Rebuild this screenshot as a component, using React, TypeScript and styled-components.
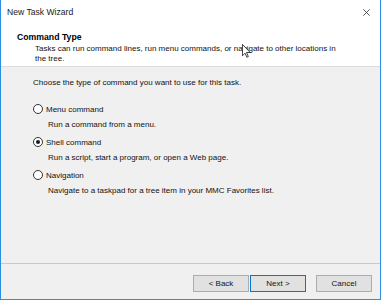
import React from 'react';
import styled, { createGlobalStyle } from 'styled-components';

const GlobalStyle = createGlobalStyle`
  html, body {
    margin: 0;
    padding: 0;
    background: #ffffff;
  }
  body {
    font-family: 'Liberation Sans', Arial, sans-serif;
    color: #000;
  }
`;

const Window = styled.div`
  position: relative;
  box-sizing: border-box;
  width: 381px;
  height: 300px;
  display: flex;
  flex-direction: column;
  background: #f0f0f0;
  border-left: 1px solid #2d8ce4;
  border-right: 1px solid #2d8ce4;
  border-bottom: 1px solid #2d8ce4;
  overflow: hidden;
`;

const TitleBar = styled.div`
  height: 24px;
  display: flex;
  align-items: center;
  justify-content: space-between;
  padding: 0 8px 0 6px;
  background: #fff;
  font-size: 8.6px;
  color: #1a1a1a;
`;

const CloseIcon = styled.svg`
  width: 7px;
  height: 7px;
  margin-right: 2px;
`;

const Header = styled.div`
  height: 43px;
  background: #fff;
  border-bottom: 1px solid #dcdcdc;
  padding: 8px 0 0 16px;
  box-sizing: border-box;
`;

const HeaderTitle = styled.div`
  font-weight: bold;
  font-size: 8.7px;
  line-height: 10px;
  margin-bottom: 2px;
`;

const HeaderText = styled.div`
  font-size: 8px;
  line-height: 10px;
  padding-left: 18px;
  width: 310px;
  color: #111;
`;

const Body = styled.div`
  flex: 1;
  padding: 11px 0 0 32px;
  font-size: 8px;
  color: #111;
`;

const Prompt = styled.div`
  line-height: 10px;
  margin-bottom: 15px;
`;

const Option = styled.div`
  display: flex;
  flex-direction: column;
  margin-bottom: 6px;
`;

const OptionRow = styled.label`
  display: flex;
  align-items: center;
  gap: 3px;
  height: 12px;
`;

const Radio = styled.span<{ $checked?: boolean }>`
  box-sizing: border-box;
  width: 10px;
  height: 10px;
  border-radius: 50%;
  border: 1px solid #333;
  background: #fff;
  display: flex;
  align-items: center;
  justify-content: center;
  &::after {
    content: '';
    width: 4px;
    height: 4px;
    border-radius: 50%;
    background: ${(p) => (p.$checked ? '#1a1a1a' : 'transparent')};
  }
`;

const OptionDesc = styled.div`
  padding-left: 15px;
  line-height: 10px;
  margin-top: 5px;
`;

const Footer = styled.div`
  height: 36px;
  box-sizing: border-box;
  border-top: 1px solid #c9c9c9;
  display: flex;
  justify-content: flex-end;
  align-items: flex-start;
  padding: 11px 8px 0 0;
`;

const Button = styled.button<{ $primary?: boolean; $gap?: number }>`
  box-sizing: border-box;
  width: 56px;
  height: 17px;
  margin-left: ${(p) => p.$gap ?? 0}px;
  background: #e1e1e1;
  border: 1px solid ${(p) => (p.$primary ? '#0078d7' : '#adadad')};
  font-family: 'Liberation Sans', Arial, sans-serif;
  font-size: 8px;
  color: #111;
  padding: 0;
`;

const Cursor = styled.svg`
  position: absolute;
  left: 241px;
  top: 44px;
  width: 9px;
  height: 14px;
`;

const options = [
  { label: 'Menu command', desc: 'Run a command from a menu.', checked: false },
  { label: 'Shell command', desc: 'Run a script, start a program, or open a Web page.', checked: true },
  { label: 'Navigation', desc: 'Navigate to a taskpad for a tree item in your MMC Favorites list.', checked: false },
];

const App: React.FC = () => (
  <>
    <GlobalStyle />
    <Window>
      <TitleBar>
        <span>New Task Wizard</span>
        <CloseIcon viewBox="0 0 10 10">
          <path d="M0.5 0.5 L9.5 9.5 M9.5 0.5 L0.5 9.5" stroke="#333" strokeWidth="1.2" />
        </CloseIcon>
      </TitleBar>
      <Header>
        <HeaderTitle>Command Type</HeaderTitle>
        <HeaderText>
          Tasks can run command lines, run menu commands, or navigate to other locations in the tree.
        </HeaderText>
      </Header>
      <Body>
        <Prompt>Choose the type of command you want to use for this task.</Prompt>
        {options.map((o) => (
          <Option key={o.label}>
            <OptionRow>
              <Radio $checked={o.checked} />
              {o.label}
            </OptionRow>
            <OptionDesc>{o.desc}</OptionDesc>
          </Option>
        ))}
      </Body>
      <Footer>
        <Button>&lt; Back</Button>
        <Button $primary $gap={1}>Next &gt;</Button>
        <Button $gap={10}>Cancel</Button>
      </Footer>
      <Cursor viewBox="0 0 12 19">
        <path d="M0.5 0.5 L0.5 16 L4 12.5 L6.5 18 L8.5 17 L6 11.5 L11 11.5 Z" fill="#fff" stroke="#000" strokeWidth="1" strokeLinejoin="round" />
      </Cursor>
    </Window>
  </>
);

export default App;
